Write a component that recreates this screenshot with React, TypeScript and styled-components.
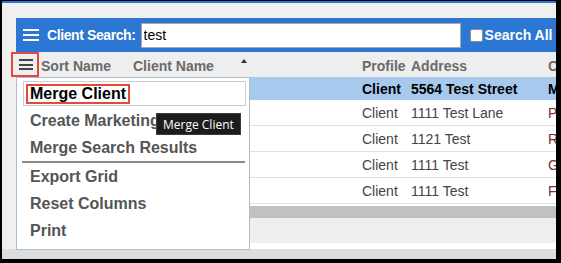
import styled, { createGlobalStyle } from "styled-components";

const GlobalStyle = createGlobalStyle`
  html, body {
    margin: 0;
    padding: 0;
    background: #000;
  }
  body {
    font-family: "Liberation Sans", Arial, sans-serif;
  }
`;

const BLUE = "#2b77d3";
const COLUMNS = "25px 92px 229px 49px 137px 1fr";

const Frame = styled.div`
  width: 561px;
  height: 263px;
  box-sizing: border-box;
  border-style: solid;
  border-color: #000;
  border-width: 1px 5px 4px 2px;
  background: #f0f0f0;
  display: flex;
  flex-direction: column;
  overflow: hidden;
`;

const TopBand = styled.div`
  flex: none;
  height: 2px;
  background: ${BLUE};
`;

const Workspace = styled.div`
  flex: 1;
  display: flex;
  flex-direction: column;
  padding: 15px 0 0 14px;
  min-height: 0;
`;

const BottomBand = styled.div`
  flex: none;
  height: 10px;
  background: #dddddd;
`;

const Toolbar = styled.div`
  flex: none;
  height: 34px;
  background: ${BLUE};
  display: flex;
  align-items: center;
  padding-left: 7px;
  color: #fff;
  font-weight: bold;
  font-size: 14px;
  white-space: nowrap;
  overflow: hidden;
`;

const Burger = styled.span<{ $size: number; $color: string }>`
  display: inline-flex;
  flex-direction: column;
  justify-content: space-between;
  width: ${(p) => p.$size}px;
  height: ${(p) => Math.round(p.$size * 0.75)}px;
  flex: none;

  i {
    display: block;
    height: 2px;
    background: ${(p) => p.$color};
  }
`;

const SearchLabel = styled.span`
  flex: none;
  margin-left: 8px;
  letter-spacing: -0.4px;
`;

const SearchInput = styled.input`
  flex: none;
  margin-left: 5px;
  width: 320px;
  height: 25px;
  box-sizing: border-box;
  border: 1px solid #a9a9a9;
  padding: 0 2px;
  font-family: "Liberation Sans", Arial, sans-serif;
  font-size: 14px;
  color: #000;
  outline: none;
`;

const CheckBox = styled.span`
  flex: none;
  margin-left: 9px;
  width: 11px;
  height: 11px;
  background: #fff;
  border: 1px solid #8f8f8f;
  border-radius: 2px;
`;

const CheckLabel = styled.span`
  flex: none;
  margin-left: 2px;
`;

const Grid = styled.div`
  position: relative;
  flex: 1;
  display: flex;
  flex-direction: column;
  background: #fff;
`;

const HeaderRow = styled.div`
  display: grid;
  grid-template-columns: ${COLUMNS};
  height: 25px;
  background: #eeeeee;
  color: #6a6a6a;
  font-weight: bold;
  font-size: 14px;
  white-space: nowrap;
`;

const HeaderCell = styled.div<{ $open?: boolean }>`
  display: flex;
  align-items: center;
  padding-top: 2px;
  overflow: ${(p) => (p.$open ? "visible" : "hidden")};
`;

const MenuButton = styled.div`
  flex: none;
  margin: -2px 0 0 -5px;
  width: 28px;
  height: 25px;
  box-sizing: border-box;
  border: 2px solid #e8473d;
  display: flex;
  align-items: center;
  justify-content: center;
  padding-left: 1px;
`;

const SortArrow = styled.span`
  align-self: flex-start;
  margin: 5px 0 0 27px;
  width: 0;
  height: 0;
  border-left: 3px solid transparent;
  border-right: 3px solid transparent;
  border-bottom: 4px solid #333;
`;

const Row = styled.div<{ $selected?: boolean }>`
  display: grid;
  grid-template-columns: ${COLUMNS};
  height: ${(p) => (p.$selected ? "23px" : "25px")};
  border-bottom: ${(p) => (p.$selected ? "none" : "1px solid #e2e2e2")};
  background: ${(p) => (p.$selected ? "#a8c9ee" : "#fff")};
  color: ${(p) => (p.$selected ? "#000" : "#444")};
  font-weight: ${(p) => (p.$selected ? "bold" : "normal")};
  font-size: 14px;
  white-space: nowrap;
`;

const Cell = styled.div<{ $accent?: boolean }>`
  display: flex;
  align-items: center;
  overflow: hidden;
  color: ${(p) => (p.$accent ? "#7a2c2c" : "inherit")};
`;

const Gap = styled.div<{ $h: number; $bg: string }>`
  flex: none;
  height: ${(p) => p.$h}px;
  background: ${(p) => p.$bg};
`;

const Menu = styled.div`
  position: absolute;
  left: 0;
  top: 25px;
  width: 234px;
  height: 173px;
  box-sizing: border-box;
  background: #fff;
  border: 1px solid #a9bfd6;
  padding: 3px 3px 0 6px;
  font-size: 16px;
  font-weight: bold;
  color: #555;
  white-space: nowrap;
`;

const MenuItem = styled.div<{ $hover?: boolean }>`
  position: relative;
  height: 25px;
  box-sizing: border-box;
  margin-bottom: 2px;
  border: 1px solid ${(p) => (p.$hover ? "#cdcdcd" : "transparent")};
  display: flex;
  align-items: center;
  padding-left: 2px;
  color: ${(p) => (p.$hover ? "#000" : "#555")};
`;

const ItemLabel = styled.span<{ $marked?: boolean }>`
  display: inline-block;
  line-height: 16px;
  padding: 0 2px;
  border: 2px solid ${(p) => (p.$marked ? "#e8473d" : "transparent")};
`;

const Separator = styled.div`
  height: 2px;
  margin: -1px 1px 1px -1px;
  background: #8a8a8a;
`;

const Tooltip = styled.div`
  position: absolute;
  left: 139px;
  top: 35px;
  height: 22px;
  box-sizing: border-box;
  padding: 0 6px;
  display: flex;
  align-items: center;
  background: #1c1c1c;
  border: 1px solid #3c3c3c;
  color: #fff;
  font-family: "Open Sans", "Noto Sans", sans-serif;
  font-weight: normal;
  font-size: 12px;
`;

function Hamburger({ size, color }: { size: number; color: string }) {
  return (
    <Burger $size={size} $color={color}>
      <i />
      <i />
      <i />
    </Burger>
  );
}

const rows = [
  { profile: "Client", address: "1111 Test Lane", more: "P" },
  { profile: "Client", address: "1121 Test", more: "R" },
  { profile: "Client", address: "1111 Test", more: "G" },
  { profile: "Client", address: "1111 Test", more: "F" },
];

const menuTop = ["Create Marketing List", "Merge Search Results"];
const menuBottom = ["Export Grid", "Reset Columns", "Print"];

export default function App() {
  return (
    <>
      <GlobalStyle />
      <Frame>
        <TopBand />
        <Workspace>
          <Toolbar>
            <Hamburger size={16} color="#fff" />
            <SearchLabel>Client Search:</SearchLabel>
            <SearchInput defaultValue="test" />
            <CheckBox />
            <CheckLabel>Search All Entities</CheckLabel>
          </Toolbar>

          <Grid>
            <HeaderRow>
              <HeaderCell $open>
                <MenuButton>
                  <Hamburger size={14} color="#444" />
                </MenuButton>
              </HeaderCell>
              <HeaderCell>Sort Name</HeaderCell>
              <HeaderCell>
                Client Name
                <SortArrow />
              </HeaderCell>
              <HeaderCell>Profile</HeaderCell>
              <HeaderCell>Address</HeaderCell>
              <HeaderCell>City</HeaderCell>
            </HeaderRow>

            <Row $selected>
              <Cell />
              <Cell />
              <Cell />
              <Cell>Client</Cell>
              <Cell>5564 Test Street</Cell>
              <Cell>Main</Cell>
            </Row>
            {rows.map((r, i) => (
              <Row key={i}>
                <Cell />
                <Cell />
                <Cell />
                <Cell>{r.profile}</Cell>
                <Cell>{r.address}</Cell>
                <Cell $accent>{r.more}</Cell>
              </Row>
            ))}

            <Gap $h={2} $bg="#fff" />
            <Gap $h={12} $bg="#c1c1c1" />
            <Gap $h={25} $bg="#eeeeee" />

            <Menu>
              <MenuItem $hover>
                <ItemLabel $marked>Merge Client</ItemLabel>
              </MenuItem>
              {menuTop.map((m) => (
                <MenuItem key={m}>
                  <ItemLabel>{m}</ItemLabel>
                </MenuItem>
              ))}
              <Separator />
              {menuBottom.map((m) => (
                <MenuItem key={m}>
                  <ItemLabel>{m}</ItemLabel>
                </MenuItem>
              ))}
              <Tooltip>Merge Client</Tooltip>
            </Menu>
          </Grid>
        </Workspace>
        <BottomBand />
      </Frame>
    </>
  );
}
